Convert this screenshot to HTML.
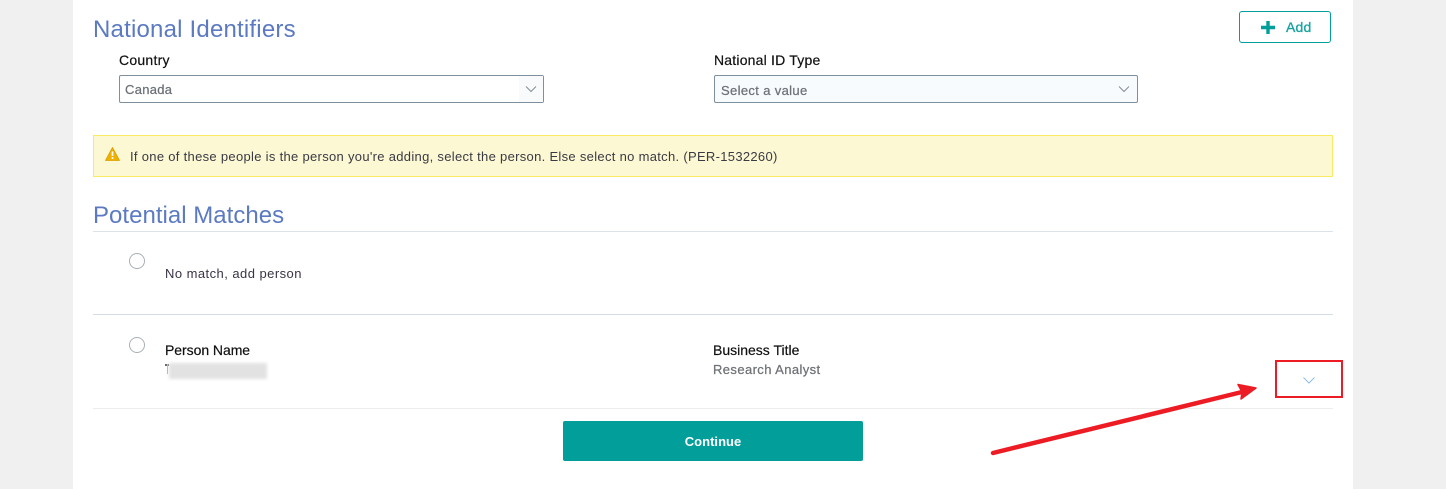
<!DOCTYPE html>
<html lang="en">
<head>
<meta charset="utf-8">
<title>Potential Matches</title>
<style>
html,body{margin:0;padding:0;width:1446px;height:489px;overflow:hidden;background:#f0f0f0;font-family:"Liberation Sans",sans-serif}
#panel{position:absolute;left:73px;top:0;width:1280px;height:489px;background:#fff}
.t{position:absolute;white-space:nowrap;line-height:18px;font-size:13px}
.h{position:absolute;white-space:nowrap;font-size:24px;line-height:30px;color:#5c7ac2;left:93px;font-weight:normal;margin:0}
.l{color:#111;-webkit-text-stroke:.2px #111;font-size:14px}
.box{position:absolute;box-sizing:border-box;border:1px solid #7f8f9c;height:28px;top:75px;border-radius:2px}
.line{position:absolute;left:93px;width:1240px}
.r{position:absolute;left:129px;width:16px;height:16px;box-sizing:border-box;border:1px solid #a9b0b6;border-radius:50%;background:#fff}
svg{position:absolute;overflow:visible}
</style>
</head>
<body>
<div id="panel"></div>

<h2 class="h" style="top:15px;letter-spacing:.2px">National Identifiers</h2>

<a style="position:absolute;left:1239px;top:11px;width:92px;height:32px;box-sizing:border-box;border:1px solid #019e9a;border-radius:3px;background:#fff"></a>
<svg style="left:1261px;top:20px" width="15" height="15" viewBox="0 0 15 15"><path d="M7 1v13M0 7.500h14" stroke="#019e9a" stroke-width="3.400" fill="none"/></svg>
<div class="t" style="left:1286px;top:18px;font-size:14px;color:#19a3a0;letter-spacing:.2px;-webkit-text-stroke:.35px #19a3a0">Add</div>

<div class="t l" style="left:119px;top:51px;letter-spacing:.25px">Country</div>
<div class="box" style="left:119px;width:425px;background:#fff">
  <div style="position:absolute;right:0;top:0;width:24px;height:26px;background:#f9fafb"></div>
</div>
<div class="t" style="left:125px;top:81px;color:#6d7278;font-size:13px;-webkit-text-stroke:.25px #6d7278;letter-spacing:.3px">Canada</div>
<svg style="left:525px;top:85px" width="12" height="9" viewBox="0 0 12 9"><path d="M1 1.500l5 5 5-5" stroke="#858d94" stroke-width="1" fill="none"/></svg>

<div class="t l" style="left:714px;top:51px;letter-spacing:.2px">National ID Type</div>
<div class="box" style="left:714px;width:424px;background:#f8fbfe"></div>
<div class="t" style="left:721px;top:82px;color:#6d7278;font-size:13px;-webkit-text-stroke:.25px #6d7278;letter-spacing:.35px">Select a value</div>
<svg style="left:1118px;top:85px" width="12" height="9" viewBox="0 0 12 9"><path d="M1 1.500l5 5 5-5" stroke="#858d94" stroke-width="1" fill="none"/></svg>

<div style="position:absolute;left:93px;top:135px;width:1240px;height:42px;box-sizing:border-box;background:#fcf8d3;border:1px solid #f7ec63"></div>
<svg style="left:105px;top:147px" width="15" height="14" viewBox="0 0 15 14"><path d="M7.500 .5L14.500 13.500H.5Z" fill="#efb100" stroke="#d99e00" stroke-width=".8" stroke-linejoin="round"/><path d="M7.500 4.500v4.500" stroke="#fff" stroke-width="1.700"/><circle cx="7.500" cy="11" r="1" fill="#fff"/></svg>
<div class="t" style="left:130px;top:148px;color:#3a3a44;font-size:13px;letter-spacing:.305px">If one of these people is the person you're adding, select the person. Else select no match. (PER-1532260)</div>

<h2 class="h" style="top:201px;letter-spacing:.02px">Potential Matches</h2>
<div class="line" style="top:231px;height:1px;background:#dde3ea"></div>

<div class="r" style="top:253px"></div>
<div class="t" style="left:165px;top:265px;color:#3a3345;font-size:13px;letter-spacing:.45px">No match, add person</div>

<div class="line" style="top:314px;height:1px;background:#d6dde4"></div>

<div class="r" style="top:337px"></div>
<div class="t l" style="left:165px;top:341px;letter-spacing:-.05px">Person Name</div>
<div style="position:absolute;left:165px;top:364px;width:4px;height:2px;background:#666"></div>
<div style="position:absolute;left:167px;top:364px;width:1px;height:10px;background:#d8a878"></div>
<div style="position:absolute;left:169px;top:363px;width:98px;height:16px;background:#e2e2e2;filter:blur(1.500px)"></div>

<div class="t l" style="left:713px;top:341px">Business Title</div>
<div class="t" style="left:713px;top:361px;color:#6f7276;font-size:13px;-webkit-text-stroke:.25px #6f7276;letter-spacing:.4px">Research Analyst</div>

<svg style="left:1303px;top:376px" width="12" height="9" viewBox="0 0 12 9"><path d="M.5 1.500L6 7l5.500-5.500" stroke="#8dbce6" stroke-width="1" fill="none"/></svg>

<div class="line" style="top:408px;height:1px;background:#ececec"></div>

<div style="position:absolute;left:563px;top:421px;width:300px;height:40px;background:#019e9a;border-radius:2px"></div>
<div class="t" style="left:563px;width:300px;text-align:center;top:433px;color:#fff;font-size:13px;font-weight:bold;letter-spacing:.03px">Continue</div>

<div style="position:absolute;left:1275px;top:360px;width:68px;height:38px;box-sizing:border-box;border:2px solid #ed1c24"></div>
<svg style="left:0;top:0" width="1446" height="489" viewBox="0 0 1446 489"><path d="M993 453L1242 392" stroke="#ed1c24" stroke-width="4.500" stroke-linecap="round" fill="none"/><path d="M1256 388L1238 384.500L1242 392L1241 399Z" fill="#ed1c24" stroke="#ed1c24" stroke-width="1.500" stroke-linejoin="round"/></svg>
</body>
</html>
